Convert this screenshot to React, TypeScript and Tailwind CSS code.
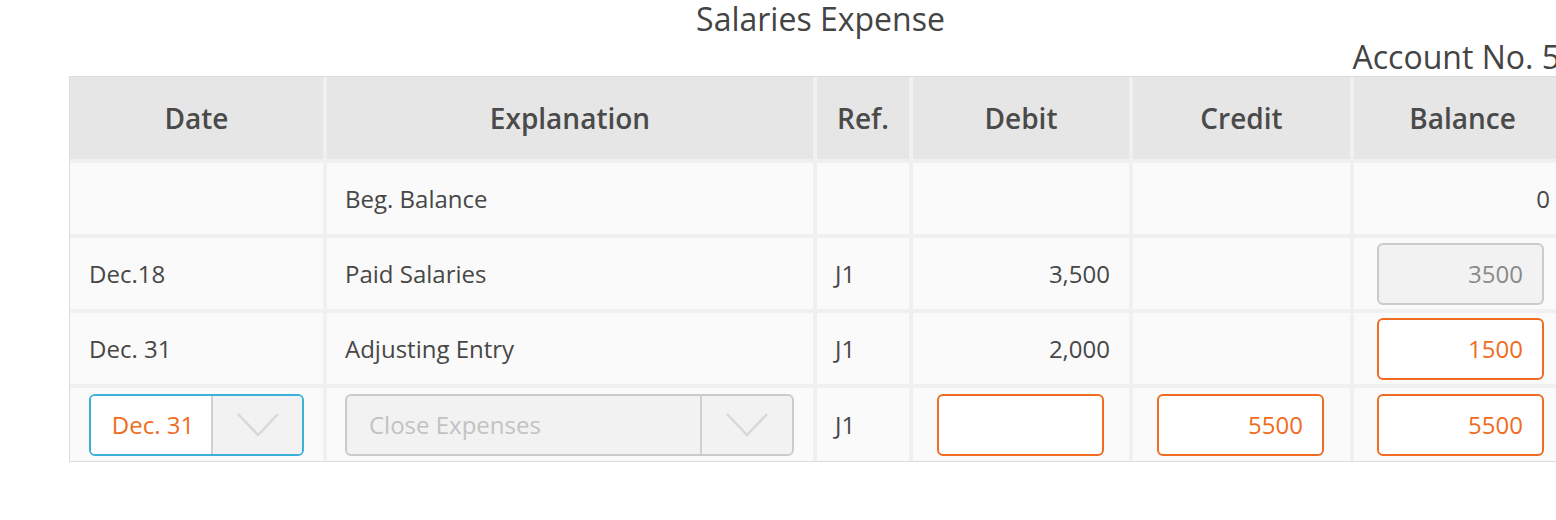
const Chevron = () => (
  <svg width="44" height="26" viewBox="0 0 44 26" fill="none">
    <polyline points="2,2 22,23 42,2" stroke="#d8d8d8" strokeWidth="2.5" />
  </svg>
);

const Cell = ({ children, className = '' }: { children?: React.ReactNode; className?: string }) => (
  <div className={`flex items-center bg-[#fafafa] text-[24px] text-[#474747] ${className}`}>{children}</div>
);

const Head = ({ children }: { children: React.ReactNode }) => (
  <div className="flex items-center justify-center bg-[#e6e6e6] text-[28px] font-semibold text-[#4a4a4a]">
    {children}
  </div>
);

const NumInput = ({ value, locked = false }: { value: string; locked?: boolean }) => (
  <input
    readOnly
    value={value}
    className={
      locked
        ? 'h-[62px] w-[167px] rounded-[6px] border-2 border-[#cbcbcb] bg-[#f2f2f2] pr-[19px] text-right text-[24px] text-[#8a8a8a] outline-none'
        : 'h-[62px] w-[167px] rounded-[6px] border-2 border-[#f06c22] bg-white pr-[19px] text-right text-[24px] text-[#f06c22] outline-none'
    }
  />
);

const rows = [
  { date: '', text: 'Beg. Balance', ref: '', debit: '', balance: '0' },
  { date: 'Dec.18', text: 'Paid Salaries', ref: 'J1', debit: '3,500', balance: 'locked' },
  { date: 'Dec. 31', text: 'Adjusting Entry', ref: 'J1', debit: '2,000', balance: 'orange' },
];

const App = () => (
  <div className="h-[520px] w-[1556px] overflow-hidden bg-white font-['Open_Sans',sans-serif]">
    <div className="ml-[69px] w-[1503px]">
      <h1 className="mt-[2px] h-[34px] text-center text-[32px] leading-[34px] text-[#444]">Salaries Expense</h1>
      <p className="mt-[5px] h-[32px] pr-[12px] text-right text-[32px] leading-[32px] text-[#444]">Account No. 5</p>

      <div className="mt-[3px] grid grid-cols-[253px_486px_92px_216px_217px_217px] grid-rows-[82px_71px_71px_71px_73px] gap-[4px] border border-[#dcdcdc] bg-[#f0f0f0]">
        <Head>Date</Head>
        <Head>Explanation</Head>
        <Head>Ref.</Head>
        <Head>Debit</Head>
        <Head>Credit</Head>
        <Head>Balance</Head>

        {rows.map((r, i) => (
          <div key={i} className="contents">
            <Cell className="pl-[19px]">{r.date}</Cell>
            <Cell className="pl-[18px]">{r.text}</Cell>
            <Cell className="pl-[18px]">{r.ref}</Cell>
            <Cell className="justify-end pr-[19px]">{r.debit}</Cell>
            <Cell />
            {r.balance === 'locked' ? (
              <Cell className="pl-[23px]">
                <NumInput value="3500" locked />
              </Cell>
            ) : r.balance === 'orange' ? (
              <Cell className="pl-[23px]">
                <NumInput value="1500" />
              </Cell>
            ) : (
              <Cell className="justify-end pr-[21px]">{r.balance}</Cell>
            )}
          </div>
        ))}

        <Cell className="pl-[19px]">
          <div className="flex h-[62px] w-[215px] overflow-hidden rounded-[6px] border-2 border-[#3bb1da]">
            <div className="flex w-[120px] items-center justify-center bg-white pl-[4px] text-[24px] text-[#f06c22]">Dec. 31</div>
            <div className="w-[2px] bg-[#d0d0d0]" />
            <div className="flex flex-1 items-center justify-center bg-[#f2f2f2]">
              <Chevron />
            </div>
          </div>
        </Cell>
        <Cell className="pl-[18px]">
          <div className="flex h-[62px] w-[449px] overflow-hidden rounded-[6px] border-2 border-[#cbcbcb] bg-[#f2f2f2]">
            <div className="flex w-[353px] items-center pl-[22px] text-[24px] text-[#c2c2c2]">Close Expenses</div>
            <div className="w-[2px] bg-[#d0d0d0]" />
            <div className="flex flex-1 items-center justify-center">
              <Chevron />
            </div>
          </div>
        </Cell>
        <Cell className="pl-[18px]">J1</Cell>
        <Cell className="pl-[24px]">
          <NumInput value="" />
        </Cell>
        <Cell className="pl-[24px]">
          <NumInput value="5500" />
        </Cell>
        <Cell className="pl-[23px]">
          <NumInput value="5500" />
        </Cell>
      </div>
    </div>
  </div>
);

export default App;
